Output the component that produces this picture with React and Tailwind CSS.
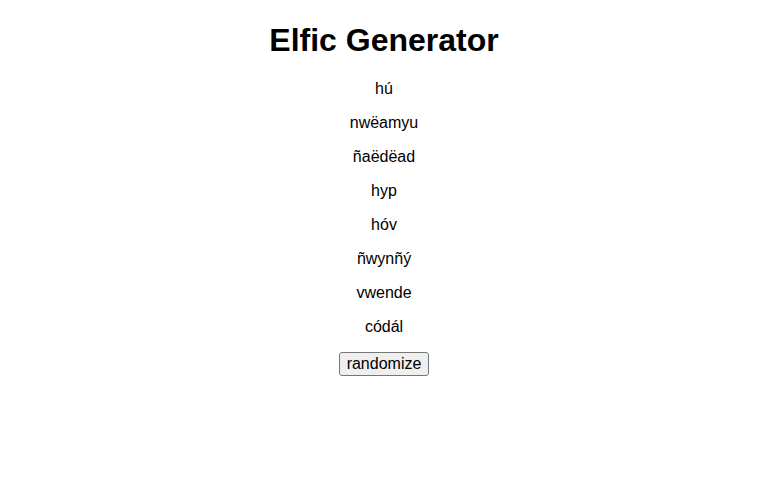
import { useState } from "react";

const WORDS = ["hú", "nwëamyu", "ñaëdëad", "hyp", "hóv", "ñwynñý", "vwende", "códál"];

const SYLLABLES = ["hú", "nwë", "amyu", "ña", "ëdë", "ad", "hyp", "hóv", "ñwy", "nñý", "vwe", "nde", "có", "dál"];

function makeWord() {
  const n = 1 + Math.floor(Math.random() * 3);
  let w = "";
  for (let i = 0; i < n; i++) w += SYLLABLES[Math.floor(Math.random() * SYLLABLES.length)];
  return w;
}

export default function App() {
  const [words, setWords] = useState(WORDS);

  return (
    <div className="text-center text-black bg-white font-['Liberation_Sans',Arial,sans-serif]">
      <h1 className="text-[32px] leading-[37px] font-bold pt-[22px] pb-[5px]">Elfic Generator</h1>
      {words.map((w, i) => (
        <p key={i} className="text-base leading-[18px] mt-4">
          {w}
        </p>
      ))}
      <button
        onClick={() => setWords(words.map(makeWord))}
        className="mt-4 h-[24px] text-base leading-[18px] px-[7px] bg-[#efefef] border border-[#767676] rounded-[3px] text-black font-['Liberation_Sans',Arial,sans-serif]"
      >
        randomize
      </button>
    </div>
  );
}
